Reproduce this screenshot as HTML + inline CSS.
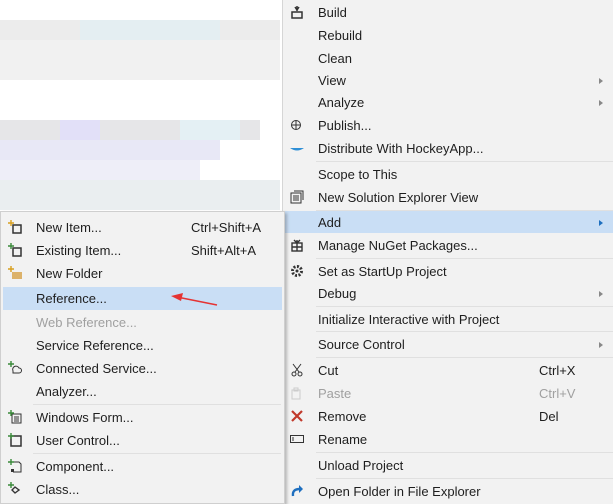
<!DOCTYPE html>
<html><head><style>
*{margin:0;padding:0;box-sizing:border-box}
body{width:613px;height:504px;overflow:hidden;background:#fff;position:relative;font-family:"Liberation Sans","Noto Sans CJK SC",sans-serif;font-size:13px;color:#1e1e1e}
#rm{position:absolute;left:282px;top:0;width:331px;height:504px;background:#f2f2f2;border-left:1px solid #d6d6d6}
#lm{position:absolute;left:0;top:211px;width:285px;height:293px;background:#f2f2f2;border:1px solid #cfcfcf;box-shadow:2px 2px 3px rgba(0,0,0,.25)}
.it{position:absolute;left:0;right:0;height:22px;line-height:24px}
#rm .t{position:absolute;left:35px}
#lm .t{position:absolute;left:35px}
.sc{position:absolute}
#rm .sc{left:256px}
#lm .sc{left:190px}
.ar{position:absolute;left:316px;top:9px;width:0;height:0;border-left:4px solid #888;border-top:3px solid transparent;border-bottom:3px solid transparent}
.hl{background:#c9def5}
.sep{position:absolute;height:1px;background:#e0e0e0}
.dis{color:#a0a0a0}
.ic{position:absolute;left:7px;top:4px;width:14px;height:14px}
</style></head><body>
<div style="position:absolute;left:0;top:20px;width:280px;height:60px;background:#ececec"></div>
<div style="position:absolute;left:80px;top:20px;width:140px;height:20px;background:#e4eef2"></div>
<div style="position:absolute;left:0;top:40px;width:280px;height:40px;background:#f1f1f1"></div>
<div style="position:absolute;left:0;top:120px;width:260px;height:20px;background:#e6e6e8"></div>
<div style="position:absolute;left:60px;top:120px;width:40px;height:20px;background:#e2e0f8"></div>
<div style="position:absolute;left:180px;top:120px;width:60px;height:20px;background:#e4f0f4"></div>
<div style="position:absolute;left:0;top:140px;width:220px;height:20px;background:#e8e8f6"></div>
<div style="position:absolute;left:0;top:160px;width:200px;height:20px;background:#eeeef8"></div>
<div style="position:absolute;left:0;top:180px;width:280px;height:30px;background:#eaeef0"></div>

<div id="rm">
<div class="it" style="top:1px"><svg class="ic" viewBox="0 0 14 14"><path d="M2 7h10v6H2z M5 2l2 3 2-3M7 1v5" fill="none" stroke="#333" stroke-width="1.5"/></svg><span class="t">Build</span></div>
<div class="it" style="top:24px"><span class="t">Rebuild</span></div>
<div class="it" style="top:47px"><span class="t">Clean</span></div>
<div class="it" style="top:69px"><span class="t">View</span><i class="ar"></i></div>
<div class="it" style="top:91px"><span class="t">Analyze</span><i class="ar"></i></div>
<div class="it" style="top:114px"><svg class="ic" viewBox="0 0 14 14"><circle cx="6" cy="7" r="4.5" fill="none" stroke="#333"/><path d="M1.5 7h9M6 2.5v9" stroke="#333"/></svg><span class="t">Publish...</span></div>
<div class="it" style="top:137px"><svg class="ic" viewBox="0 0 14 14"><path d="M0 7q7 5 14 0z" fill="#2e8fd6"/></svg><span class="t">Distribute With HockeyApp...</span></div>
<div class="sep" style="top:161px;left:33px;right:0"></div>
<div class="it" style="top:163px"><span class="t">Scope to This</span></div>
<div class="it" style="top:186px"><svg class="ic" viewBox="0 0 14 14"><rect x="1" y="3" width="10" height="10" fill="none" stroke="#333"/><path d="M3 6h6M3 8h6M3 10h6M4 1h9v9" stroke="#333" fill="none"/></svg><span class="t">New Solution Explorer View</span></div>
<div class="sep" style="top:210px;left:33px;right:0"></div>
<div class="it hl" style="top:211px"><span class="t">Add</span><i class="ar" style="border-left-color:#1e6fbf"></i></div>
<div class="it" style="top:234px"><svg class="ic" viewBox="0 0 14 14"><rect x="2" y="5" width="10" height="8" fill="none" stroke="#333" stroke-width="1.4"/><path d="M7 2v11M2 9h10M4 2l3 3 3-3" stroke="#333" fill="none" stroke-width="1.4"/></svg><span class="t">Manage NuGet Packages...</span></div>
<div class="sep" style="top:258px;left:33px;right:0"></div>
<div class="it" style="top:260px"><svg class="ic" viewBox="0 0 14 14"><circle cx="7" cy="7" r="4.5" fill="none" stroke="#333" stroke-width="3" stroke-dasharray="2 1.5"/><circle cx="7" cy="7" r="1.5" fill="#333"/></svg><span class="t">Set as StartUp Project</span></div>
<div class="it" style="top:282px"><span class="t">Debug</span><i class="ar"></i></div>
<div class="sep" style="top:306px;left:33px;right:0"></div>
<div class="it" style="top:308px"><span class="t">Initialize Interactive with Project</span></div>
<div class="sep" style="top:331px;left:33px;right:0"></div>
<div class="it" style="top:333px"><span class="t">Source Control</span><i class="ar"></i></div>
<div class="sep" style="top:357px;left:33px;right:0"></div>
<div class="it" style="top:359px"><svg class="ic" viewBox="0 0 14 14"><path d="M3 1l6 8M11 1L5 9" stroke="#333" fill="none"/><circle cx="4" cy="11" r="2" fill="none" stroke="#333"/><circle cx="10" cy="11" r="2" fill="none" stroke="#333"/></svg><span class="t">Cut</span><span class="sc">Ctrl+X</span></div>
<div class="it dis" style="top:382px"><svg class="ic" viewBox="0 0 14 14"><rect x="2" y="4" width="8" height="9" fill="none" stroke="#ccc"/><rect x="4" y="2" width="4" height="3" fill="none" stroke="#ccc"/></svg><span class="t">Paste</span><span class="sc">Ctrl+V</span></div>
<div class="it" style="top:405px"><svg class="ic" viewBox="0 0 14 14"><path d="M2 2l10 10M12 2L2 12" stroke="#c1392b" stroke-width="2.2"/></svg><span class="t">Remove</span><span class="sc">Del</span></div>
<div class="it" style="top:428px"><svg class="ic" viewBox="0 0 14 14"><rect x="0.5" y="3.5" width="13" height="7" fill="none" stroke="#333"/><path d="M3 5v4" stroke="#333"/></svg><span class="t">Rename</span></div>
<div class="sep" style="top:452px;left:33px;right:0"></div>
<div class="it" style="top:454px"><span class="t">Unload Project</span></div>
<div class="sep" style="top:478px;left:33px;right:0"></div>
<div class="it" style="top:480px"><svg class="ic" viewBox="0 0 14 14"><path d="M3 12Q2 5 10 5" fill="none" stroke="#1e6fbf" stroke-width="2.4"/><path d="M9 1l4 4-4 4z" fill="#1e6fbf"/></svg><span class="t">Open Folder in File Explorer</span></div>
</div>

<div id="lm">
<div class="it" style="top:4px"><svg class="ic" viewBox="0 0 14 14"><rect x="5" y="5" width="8" height="8" fill="none" stroke="#333" stroke-width="1.5"/><path d="M3 0v6M0 3h6" stroke="#d8a020" stroke-width="1.4"/></svg><span class="t">New Item...</span><span class="sc">Ctrl+Shift+A</span></div>
<div class="it" style="top:27px"><svg class="ic" viewBox="0 0 14 14"><rect x="5" y="5" width="8" height="8" fill="none" stroke="#333" stroke-width="1.5"/><path d="M3 0v6M0 3h6" stroke="#3a8a3a" stroke-width="1.4"/></svg><span class="t">Existing Item...</span><span class="sc">Shift+Alt+A</span></div>
<div class="it" style="top:50px"><svg class="ic" viewBox="0 0 14 14"><rect x="4" y="6" width="10" height="7" fill="#dcb26a"/><path d="M3 0v6M0 3h6" stroke="#d8a020" stroke-width="1.4"/></svg><span class="t">New Folder</span></div>
<div class="it hl" style="top:75px;left:2px;right:2px;height:23px;line-height:24px"><span class="t" style="left:33px">Reference...</span>
<svg style="position:absolute;left:166px;top:5px" width="50" height="16"><path d="M48 13L8 5" stroke="#e53333" stroke-width="1.6"/><path d="M2 4l12-3-2 8z" fill="#e53333"/></svg></div>
<div class="it dis" style="top:99px"><span class="t">Web Reference...</span></div>
<div class="it" style="top:122px"><span class="t">Service Reference...</span></div>
<div class="it" style="top:145px"><svg class="ic" viewBox="0 0 14 14"><path d="M3 0v6M0 3h6" stroke="#3a8a3a" stroke-width="1.4"/><path d="M5 10a3 3 0 016-3 2 2 0 010 5H5z" fill="none" stroke="#333"/></svg><span class="t">Connected Service...</span></div>
<div class="it" style="top:168px"><span class="t">Analyzer...</span></div>
<div class="sep" style="top:192px;left:32px;right:3px"></div>
<div class="it" style="top:194px"><svg class="ic" viewBox="0 0 14 14"><rect x="4" y="4" width="9" height="9" fill="none" stroke="#333"/><path d="M6 7h5M6 9h5M6 11h5" stroke="#333"/><path d="M3 0v6M0 3h6" stroke="#3a8a3a" stroke-width="1.4"/></svg><span class="t">Windows Form...</span></div>
<div class="it" style="top:217px"><svg class="ic" viewBox="0 0 14 14"><rect x="3" y="3" width="10" height="10" fill="none" stroke="#333" stroke-width="1.5"/><path d="M3 0v6M0 3h6" stroke="#3a8a3a" stroke-width="1.4"/></svg><span class="t">User Control...</span></div>
<div class="sep" style="top:241px;left:32px;right:3px"></div>
<div class="it" style="top:243px"><svg class="ic" viewBox="0 0 14 14"><path d="M5 3h6l2 2v8H5" fill="none" stroke="#333"/><rect x="3" y="10" width="3" height="3" fill="#333"/><path d="M3 0v6M0 3h6" stroke="#3a8a3a" stroke-width="1.4"/></svg><span class="t">Component...</span></div>
<div class="it" style="top:266px"><svg class="ic" viewBox="0 0 14 14"><path d="M7 5l4 3-4 3-3-3z" fill="none" stroke="#333" stroke-width="1.4"/><path d="M3 0v6M0 3h6" stroke="#3a8a3a" stroke-width="1.4"/></svg><span class="t">Class...</span></div>
</div>
</body></html>
